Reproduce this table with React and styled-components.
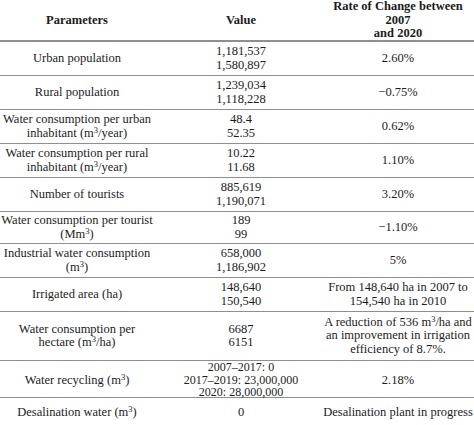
import styled, { createGlobalStyle } from 'styled-components';

const GlobalStyle = createGlobalStyle`
    html, body {
        margin: 0;
        padding: 0;
        background: #ffffff;
    }

    body {
        font-family: "Liberation Serif", "Times New Roman", serif;
        color: #1c1c1c;
        overflow: hidden;
    }
`;

const Table = styled.div`
    width: 474px;
    height: 425px;
    overflow: hidden;
    display: flex;
    flex-direction: column;
`;

const Row = styled.div`
    display: grid;
    grid-template-columns: 154px 174px 140px;
    height: ${({$h}) => $h}px;
    flex: 0 0 auto;
    box-sizing: border-box;
    border-bottom: ${({$head}) => ($head ? '2px solid #8f8f8f' : '1px solid #8f8f8f')};
    ${({$last}) => $last && 'border-bottom: none;'}
`;

const Cell = styled.div`
    display: flex;
    flex-direction: column;
    justify-content: center;
    align-items: center;
    text-align: center;
    white-space: nowrap;
    font-size: ${({$fs}) => $fs || 12.5}px;
    line-height: ${({$lh}) => $lh || 13.5}px;
    font-weight: ${({$head}) => ($head ? 700 : 400)};
    padding-bottom: ${({$head}) => ($head ? 6 : 0)}px;
`;

const Line = styled.span`
    display: block;
`;

const Sup = styled.span`
    position: relative;
    top: -0.42em;
    font-size: 0.68em;
    line-height: 1;
`;

const m3 = <>m<Sup>3</Sup></>;

const rows = [
    {h: 34, param: ['Urban population'], value: ['1,181,537', '1,580,897'], rate: ['2.60%']},
    {h: 34, param: ['Rural population'], value: ['1,239,034', '1,118,228'], rate: ['\u22120.75%']},
    {
        h: 34,
        param: ['Water consumption per urban', <>inhabitant ({m3}/year)</>],
        value: ['48.4', '52.35'],
        rate: ['0.62%'],
    },
    {
        h: 34,
        param: ['Water consumption per rural', <>inhabitant ({m3}/year)</>],
        value: ['10.22', '11.68'],
        rate: ['1.10%'],
    },
    {h: 34, param: ['Number of tourists'], value: ['885,619', '1,190,071'], rate: ['3.20%']},
    {
        h: 32,
        param: ['Water consumption per tourist', <>(M{m3})</>],
        value: ['189', '99'],
        rate: ['\u22121.10%'],
    },
    {
        h: 34,
        param: ['Industrial water consumption', <>({m3})</>],
        value: ['658,000', '1,186,902'],
        rate: ['5%'],
    },
    {
        h: 34,
        param: ['Irrigated area (ha)'],
        value: ['148,640', '150,540'],
        rate: ['From 148,640 ha in 2007 to', '154,540 ha in 2010'],
    },
    {
        h: 49,
        param: ['Water consumption per', <>hectare ({m3}/ha)</>],
        value: ['6687', '6151'],
        rate: [
            <>A reduction of 536 {m3}/ha and</>,
            'an improvement in irrigation',
            'efficiency of 8.7%.',
        ],
    },
    {
        h: 37,
        lh: 12.5,
        fs: 12,
        param: [<>Water recycling ({m3})</>],
        value: ['2007\u20132017: 0', '2017\u20132019: 23,000,000', '2020: 28,000,000'],
        rate: ['2.18%'],
    },
    {
        h: 29,
        last: true,
        param: [<>Desalination water ({m3})</>],
        value: ['0'],
        rate: ['Desalination plant in progress'],
    },
];

function Lines({items}) {
    return items.map((item, i) => <Line key={i}>{item}</Line>);
}

export default function App() {
    return (
        <>
            <GlobalStyle/>
            <Table>
                <Row $h={42} $head>
                    <Cell $head>Parameters</Cell>
                    <Cell $head>Value</Cell>
                    <Cell $head>
                        <Lines items={['Rate of Change between', '2007', 'and 2020']}/>
                    </Cell>
                </Row>
                {rows.map((row, i) => (
                    <Row key={i} $h={row.h} $last={row.last}>
                        <Cell $lh={row.lh}><Lines items={row.param}/></Cell>
                        <Cell $lh={row.lh} $fs={row.fs}><Lines items={row.value}/></Cell>
                        <Cell $lh={row.lh}><Lines items={row.rate}/></Cell>
                    </Row>
                ))}
            </Table>
        </>
    );
}
